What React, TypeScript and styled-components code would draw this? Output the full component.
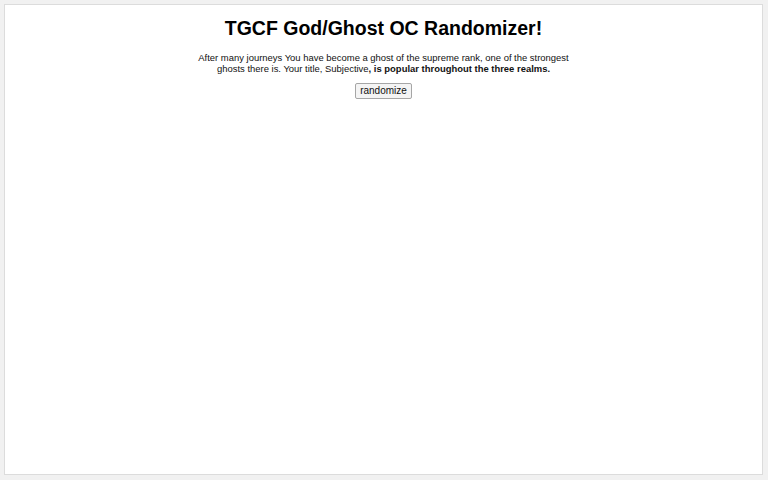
import styled, { createGlobalStyle } from 'styled-components';

const GlobalStyle = createGlobalStyle`
  html, body {
    margin: 0;
    height: 100%;
    background: #f1f1f1;
  }
  body {
    padding: 4px;
    box-sizing: border-box;
    font-family: "Liberation Sans", Arial, sans-serif;
  }
  #root {
    height: 100%;
  }
`;

export default function App() {
  return (
    <>
      <GlobalStyle />
      <Page>
        <Title>TGCF God/Ghost OC Randomizer!</Title>
        <Story>
          After many journeys You have become a ghost of the supreme rank, one of the strongest
          ghosts there is. Your title, Subjective<strong>, is popular throughout the three realms.</strong>
        </Story>
        <RandomButton type="button">randomize</RandomButton>
      </Page>
    </>
  );
}

const Page = styled.main`
  box-sizing: border-box;
  height: calc(100% - 1px);
  width: calc(100% - 1px);
  background: #fff;
  border: 1px solid #dcdcdc;
  display: flex;
  flex-direction: column;
  align-items: center;
  padding-top: 11px;
`;

const Title = styled.h1`
  margin: 0 0 12px;
  font-size: 19.5px;
  line-height: 24px;
  font-weight: bold;
  color: #000;
`;

const Story = styled.p`
  margin: 0 0 9px;
  width: 390px;
  font-size: 9.45px;
  line-height: 11px;
  text-align: center;
  color: #111;
`;

const RandomButton = styled.button`
  font-family: "Liberation Sans", Arial, sans-serif;
  font-size: 10px;
  line-height: 12px;
  padding: 1px 4px;
  background: #f4f4f4;
  border: 1px solid #a6a6a6;
  border-radius: 2px;
  color: #111;
`;
